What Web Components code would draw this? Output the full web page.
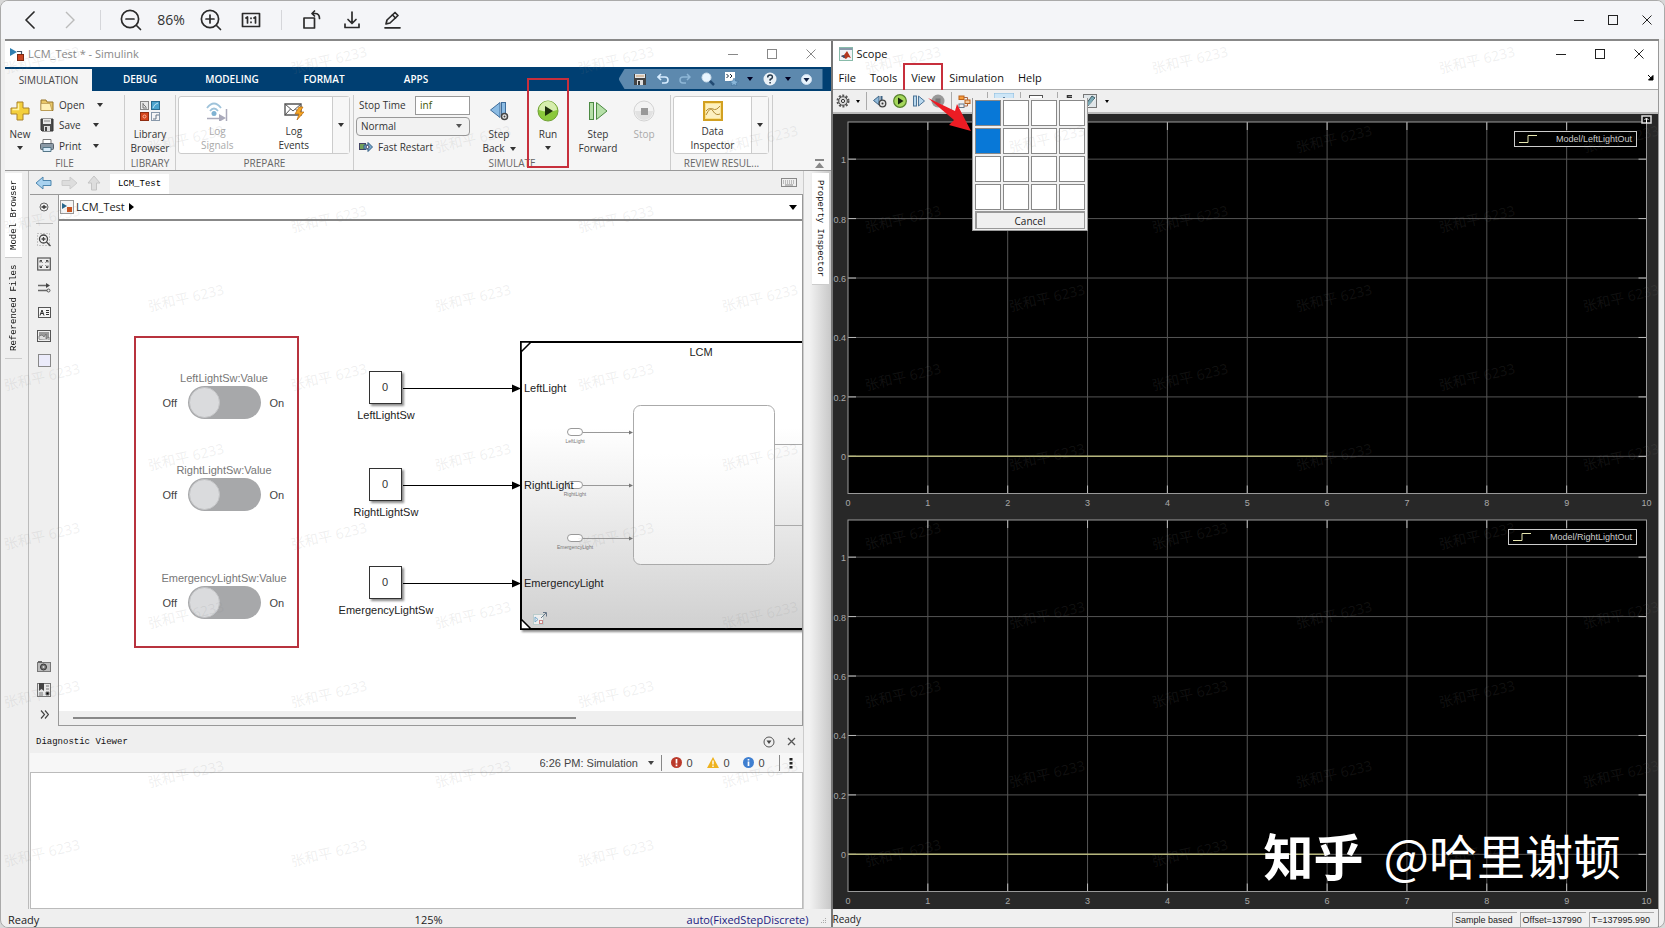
<!DOCTYPE html>
<html lang="en">
<head>
<meta charset="utf-8">
<title>Simulink and Scope</title>
<style>
  html, body { height: 100%; }
  body { margin: 0; background: #d8d8d8; overflow: hidden; font: 10px/14px "Open Sans", "Noto Sans", sans-serif; color: #333; }
</style>
</head>
<body>
<viewer-app></viewer-app>
<script>
const base = `
  *, *::before, *::after { box-sizing: border-box; }
  button { font: inherit; color: inherit; background: none; border: 0; padding: 0; margin: 0; display: flex; align-items: center; justify-content: center; }
  input, select { font: inherit; color: inherit; margin: 0; }
`;
function define(name, css, html, setup) {
  const tpl = document.createElement('template');
  tpl.innerHTML = `<style>${base}${css}</style>${html}`;
  customElements.define(name, class extends HTMLElement {
    constructor() {
      super();
      this.attachShadow({ mode: 'open' }).append(tpl.content.cloneNode(true));
    }
    connectedCallback() { if (setup && !this.ready) { this.ready = true; setup(this, this.shadowRoot); } }
  });
}

/* name: [width, height, markup] */
const dark = 'fill="none" stroke="#2b2b2b" stroke-width="1.7" stroke-linecap="round" stroke-linejoin="round"';
const icons = {
  back: [12, 18, `<path d="M10 1 2 9l8 8" ${dark}/>`],
  forward: [12, 18, `<path d="M2 1l8 8-8 8" fill="none" stroke="#bbb" stroke-width="1.4"/>`],
  zoomout: [22, 22, `<g ${dark}><circle cx="10" cy="10" r="8.6"/><path d="M6 10h8M16.500 16.500l4 4"/></g>`],
  zoomin: [22, 22, `<g ${dark}><circle cx="10" cy="10" r="8.600"/><path d="M6 10h8M10 6v8M16.500 16.500l4 4"/></g>`],
  actual: [20, 18, `<g ${dark}><rect x="1.500" y="2.500" width="17" height="13"/><path d="M5 7l1.500-1v6M13 7l1.500-1v6"/><path d="M10 7v.5M10 11v.5"/></g>`],
  rotate: [20, 20, `<g ${dark}><rect x="2" y="8" width="10.500" height="10"/><path d="M10 3.500h3q4.500 0 4.500 5M12.500 1 10 3.500 12.500 6"/></g>`],
  download: [18, 18, `<g ${dark}><path d="M9 1v11M5 8.500l4 4 4-4M2 13v3.500h14V13"/></g>`],
  edit: [18, 18, `<g ${dark}><path d="M2 16.800h15M3 13l1-4L12 1.500l3 3L7 12z"/><path d="M9.500 4l3 3"/></g>`],
  min: [10, 10, `<path d="M0 5.500h10" stroke="currentColor"/>`],
  max: [10, 10, `<rect x=".5" y=".5" width="9" height="9" fill="none" stroke="currentColor"/>`],
  close: [10, 10, `<path d="M.5 .5l9 9M9.500 .5l-9 9" stroke="currentColor"/>`],
  down: [6, 4, `<path d="M0 0h6L3 4z" fill="currentColor"/>`],
  play: [5, 8, `<path d="M0 0v8l5-4z" fill="#000"/>`],
  simulink: [14, 14, `<path d="M0 1l7 4-7 4z" fill="#2f7fb0"/><path d="M7 4.500h4.500V8" fill="none" stroke="#456" stroke-width="1.200"/><rect x="7.500" y="7.500" width="6" height="6" fill="#c9431f" stroke="#7d2911"/>`],
  doc: [14, 14, `<rect x=".5" y=".5" width="13" height="13" fill="#f4f4f4" stroke="#999"/><path d="M2 3l5 3-5 3z" fill="#27668c"/><rect x="7" y="7" width="5" height="5" fill="#c9531f"/>`],
  matlab: [14, 14, `<rect x=".5" y=".5" width="13" height="13" fill="#f1f3f5" stroke="#8ba"/><path d="M.5 2h13" stroke="#89a" stroke-width="2"/><path d="M2 9l3-1 3-4 4 7-3-1-2 2z" fill="#b5371c"/><path d="M2 9l3-1 1 2-1 1z" fill="#357"/>`],
  plus: [20, 20, `<path d="M7 1h6v6h6v6h-6v6H7v-6H1V7h6z" fill="#f3cf3c" stroke="#a9812a"/><path d="M8.500 2.500v6h-6" fill="none" stroke="#fff4a8" stroke-width="1.500"/>`],
  open: [14, 12, `<path d="M1 1h5l1 2h6v8.500H1z" fill="#e9c767" stroke="#96752b"/><path d="M1 4.500h9l2 7H1z" fill="#fff0b5" stroke="#b4934b" stroke-width=".7"/>`],
  save: [14, 14, `<path d="M1 1h12v12H2l-1-1z" fill="#4b4b4b" stroke="#333"/><rect x="3" y="1" width="8" height="5" fill="#e8e8e8"/><path d="M4 3h6" stroke="#888"/><rect x="4" y="8" width="6" height="5" fill="#ddd"/><rect x="5" y="9" width="2" height="4" fill="#444"/>`],
  print: [14, 13, `<path d="M3 .5h8V5H3z" fill="#fff" stroke="#777"/><rect x=".5" y="4.500" width="13" height="6" rx="1" fill="#8c9aa6" stroke="#56616b"/><path d="M3 8.500h8v4H3z" fill="#d8ecfa" stroke="#578"/>`],
  library: [20, 20, `<rect x=".5" y=".5" width="8" height="8" fill="#e7e7e7" stroke="#888"/><path d="M3 2v5h4M3 3l3 3" fill="none" stroke="#777"/><rect x="11.500" y=".5" width="8" height="8" fill="#4aa3cd" stroke="#276b8f"/><path d="M13 7q1-4 5-5" stroke="#b8e2f5" fill="none"/><rect x=".5" y="11.500" width="8" height="8" fill="#d4461d" stroke="#8f2d11"/><circle cx="4.500" cy="15.500" r="1.500" fill="none" stroke="#ffb59a"/><rect x="11.500" y="11.500" width="8" height="8" fill="#f5f5f5" stroke="#8898aa"/><path d="M13 18h3v-4h3" fill="none" stroke="#678"/>`],
  logsignals: [22, 20, `<g fill="none" stroke="#9fc3da" stroke-width="1.800"><path d="M1 7q7-9 14 0M4 10q4-5 8 0"/></g><circle cx="8" cy="12.500" r="2.500" fill="#7fb2d2"/><path d="M1 17.500h12M20.500 8v12" stroke="#aab" fill="none" stroke-width="1.500"/><path d="M13 13l7 4-7 4z" fill="#aab"/>`],
  logevents: [20, 18, `<path d="M1 2h16v11H1z" fill="#fff" stroke="#555" stroke-width="1.400"/><path d="M1 2l8 7 8-7M1 13l5.500-6M17 13l-5.500-6" fill="none" stroke="#555"/><path d="M15 5l-4 7h4l-2 6 7-8h-4l3-5z" fill="#f6a623" stroke="#b86a10" stroke-width=".7"/>`],
  restart: [14, 10, `<rect x=".5" y="1.500" width="6" height="6" fill="#73a05b" stroke="#446"/><path d="M5 3h4V.5l4.500 4.500L9 9.500V7H5z" fill="#78a9cf" stroke="#355e82"/><circle cx="8.500" cy="5" r="1.500" fill="#fff" stroke="#446"/>`],
  stepback: [20, 20, `<path d="M11 1.500v15L1.500 9z" fill="#8bbbe3" stroke="#3f6c9a"/><rect x="12.500" y="1.500" width="4" height="14" fill="#8bbbe3" stroke="#3f6c9a"/><circle cx="15.500" cy="15.500" r="3" fill="#eee" stroke="#444" stroke-width="1.500"/><circle cx="15.500" cy="15.500" r="1" fill="#444"/>`],
  run: [22, 22, `<circle cx="11" cy="11" r="10" fill="#8bc83b" stroke="#71a136"/><path d="M2 10a9 9 0 0118 0q-9 3-18 0z" fill="#d6edad"/><path d="M8 6l8 5-8 5z" fill="#1d2d0c"/>`],
  step: [20, 20, `<rect x="1.500" y="1.500" width="4" height="17" fill="#b6e0a8" stroke="#4c8a43"/><path d="M8.500 1.500v17L19 10z" fill="#b6e0a8" stroke="#4c8a43"/>`],
  stop: [22, 22, `<circle cx="11" cy="11" r="10" fill="#f3f3f3" stroke="#d3d3d3"/><path d="M2 11a9 9 0 0018 0z" fill="#e2e2e2"/><rect x="8" y="8" width="7" height="7" fill="#999"/>`],
  inspector: [20, 20, `<rect x="1" y="1" width="18" height="18" fill="#fbe18a" stroke="#d2a021" stroke-width="2"/><rect x="3" y="3" width="14" height="14" fill="#fdf0c0"/><path d="M3 14q4-8 7-6t7-3M3 10q4-5 7 0t7 3" fill="none" stroke="#b08a35"/>`],
  savebar: [14, 13, `<rect x="1" y="1" width="12" height="11" fill="#444"/><rect x="2" y="1" width="10" height="4" fill="#e6e6e6"/><path d="M3 3h8" stroke="#c96"/><rect x="4" y="7" width="6" height="5" fill="#ddd"/><rect x="5" y="8" width="2" height="4" fill="#333"/>`],
  undo: [12, 12, `<path d="M4 1L1 4l3 3M1 4h7q3 0 3 3t-3 3H5" fill="none" stroke="#d6ecff" stroke-width="1.600"/>`],
  redo: [12, 12, `<path d="M8 1l3 3-3 3M11 4H4Q1 4 1 7t3 3h3" fill="none" stroke="#8db6d6" stroke-width="1.500"/>`],
  find: [14, 14, `<path d="M8 8l5 5" stroke="#234b73" stroke-width="2.500"/><circle cx="5.500" cy="5.500" r="4.500" fill="#eaf6ff" stroke="#c9dcea"/>`],
  fav: [14, 14, `<rect x="0" y="0" width="10" height="9" fill="#fff"/><path d="M1.500 2l2 2-2 2M5 2l2 2-2 2" stroke="#123" fill="none"/><path d="M9 6l1.500 3 3 .4-2.300 2 .6 2.600L9 12.500 6.500 14l.4-2.600-2-2L7.700 9z" fill="#88b5d8" stroke="#3e6f98" stroke-width=".6"/>`],
  help: [14, 14, `<circle cx="7" cy="7" r="6.500" fill="#eaf1f7"/><path d="M4.700 5.500q0-2.500 2.400-2.500t2.300 2.200Q9.400 6.600 7.100 7.500v1.300M7.100 10v1.500" stroke="#24384a" stroke-width="1.500" fill="none"/>`],
  circledown: [11, 11, `<circle cx="5.500" cy="5.500" r="5" fill="#eaf4fc" stroke="#cde"/><path d="M2.500 4h6l-3 4z" fill="#124"/>`],
  ringdown: [12, 12, `<circle cx="6" cy="6" r="5" fill="none" stroke="#555"/><path d="M3.500 4.500h5L6 8z" fill="#444"/>`],
  collapse: [9, 9, `<path d="M0 1h9" stroke="#888" stroke-width="2"/><path d="M0 9h9L4.500 3.500z" fill="#888"/>`],
  navback: [17, 14, `<path d="M1 7l7-6v3.500h8v5H8V13z" fill="#a8d2ef" stroke="#4e86ad"/>`],
  navfwd: [17, 14, `<path d="M16 7L9 1v3.500H1v5h8V13z" fill="#ddd" stroke="#ccc"/>`],
  navup: [14, 16, `<path d="M7 1l6 7h-3.500v7h-5V8H1z" fill="#ddd" stroke="#c4c4c4"/>`],
  keyboard: [16, 9, `<rect x=".5" y=".5" width="15" height="8" fill="#eee" stroke="#888"/><path d="M2 3h12M2 5h12" stroke="#888" stroke-dasharray="1 1"/><path d="M4 7h8" stroke="#888"/>`],
  hide: [10, 10, `<circle cx="5" cy="5" r="4" fill="none" stroke="#666"/><path d="M2.500 5h5M5 3v4" stroke="#333" stroke-width="1.300"/>`],
  palzoom: [14, 14, `<rect x=".5" y=".5" width="12" height="12" fill="none" stroke="#999" stroke-dasharray="1 2"/><circle cx="6.500" cy="6" r="4" fill="#f5f5f5" stroke="#444" stroke-width="1.300"/><path d="M4.500 6h4M6.500 4v4M9.500 9l4 4" stroke="#444" stroke-width="1.300"/>`],
  palfit: [14, 14, `<rect x=".7" y="1" width="12.600" height="12" fill="#eee" stroke="#555" stroke-width="1.200"/><path d="M3 5.500V3.500h2M9 3.500h2v2M11 8.500v2H9M5 10.500H3v-2M3 3.500l2.500 2M11 3.500l-2.500 2M11 10.500l-2.500-2M3 10.500l2.500-2" stroke="#444" fill="none"/>`],
  palroute: [14, 10, `<path d="M1 2.500h9M1 7.500h10" stroke="#666" stroke-width="1.300"/><path d="M9 0l4 2.500L9 5z" fill="#444"/><circle cx="11.500" cy="7.500" r="1.500" fill="#eee" stroke="#555"/>`],
  palnote: [13, 11, `<rect x=".5" y=".5" width="12" height="10" fill="#f5f5f5" stroke="#555"/><path d="M2 8.500L4 3l2 5.500M2.800 6.500h2.500M8 3.500h3M8 5.500h3M8 7.500h3" stroke="#333" fill="none"/>`],
  palimg: [14, 12, `<rect x=".5" y=".5" width="13" height="11" fill="#eee" stroke="#555"/><rect x="2" y="2" width="10" height="8" fill="#999"/><path d="M2 9V6l3-1 2 2 2-3v5l3-2v3" fill="#ddd" stroke="#666" stroke-width=".7"/>`],
  palbox: [13, 13, `<rect x=".5" y=".5" width="12" height="12" fill="#ebebfa" stroke="#888"/>`],
  camera: [14, 11, `<rect x=".5" y="1.500" width="13" height="9" fill="#bbb" stroke="#777"/><path d="M1 1h4" stroke="#666" stroke-width="2"/><circle cx="6.500" cy="6" r="3" fill="#777" stroke="#333"/><circle cx="6.500" cy="6" r="1" fill="#ddd"/>`],
  palbook: [14, 14, `<rect x=".5" y=".5" width="13" height="13" fill="#e8e8e8" stroke="#777"/><path d="M2 0h5v8L4.500 6 2 8z" fill="#444"/><path d="M9 3h3M9 6h3M2 10h4M2 12h4M9 9h3v3H9z" stroke="#777"/>`],
  chevrons: [9, 9, `<path d="M1 .5l3.500 4L1 8.500M5 .5l3.500 4L5 8.500" fill="none" stroke="#444" stroke-width="1.200"/>`],
  error: [11, 11, `<circle cx="5.500" cy="5.500" r="5.500" fill="#bb3a2b"/><path d="M5.500 2v4.500M5.500 7.500v1.800" stroke="#fff" stroke-width="1.700"/>`],
  warn: [12, 11, `<path d="M6 0l6 11H0z" fill="#eeb21f"/><path d="M6 3.500v4M6 8.500V10" stroke="#fff" stroke-width="1.400"/>`],
  info: [11, 11, `<circle cx="5.500" cy="5.500" r="5.500" fill="#3f7fd0"/><path d="M5.500 4.500V9M5.500 2v1.600" stroke="#fff" stroke-width="1.700"/>`],
  dots: [4, 12, `<path d="M.5 1h3v2.500h-3zM.5 5h3v2.500h-3zM.5 9h3v2.500h-3z" fill="#222"/>`],
  grip: [8, 8, `<path d="M6 2h1v1H6zM4 4h1v1H4zM6 4h1v1H6zM2 6h1v1H2zM4 6h1v1H4zM6 6h1v1H6z" fill="#aaa"/>`],
  gear: [14, 14, `<circle cx="7" cy="7" r="5.500" fill="none" stroke="#555" stroke-width="2" stroke-dasharray="2 1.500"/><circle cx="7" cy="7" r="4.300" fill="#ddd" stroke="#444"/><circle cx="7" cy="7" r="1.600" fill="#eee" stroke="#333"/>`],
  sstepback: [14, 13, `<path d="M6 1v9L.5 5.500z" fill="#8fb9da" stroke="#3f6485"/><path d="M8.500 1v5" stroke="#3f6485" stroke-width="2"/><circle cx="9.500" cy="8.500" r="3.300" fill="#ddd" stroke="#444" stroke-width="1.300"/><circle cx="9.500" cy="8.500" r="1" fill="#333"/>`],
  srun: [14, 14, `<circle cx="7" cy="7" r="6.300" fill="#a5d75b" stroke="#55802a" stroke-width="1.200"/><path d="M5 3.500l5.500 3.500L5 10.500z" fill="#17240c"/>`],
  sstep: [12, 12, `<rect x=".5" y="1" width="3" height="10" fill="#b9d8ee" stroke="#4c7597"/><path d="M5.500 1v10l6-5z" fill="#b9d8ee" stroke="#4c7597"/>`],
  sstop: [14, 14, `<circle cx="7" cy="7" r="6.500" fill="#999"/><rect x="4.500" y="4.500" width="5" height="5" fill="#777"/>`],
  sblocks: [13, 13, `<rect x="1" y="1" width="5" height="3.500" fill="#f79b3a" stroke="#b9601a"/><rect x="7" y="5" width="5" height="3.500" fill="#f2c79a" stroke="#b9601a"/><rect x="1" y="9" width="5" height="3.500" fill="#eee" stroke="#678"/><path d="M6 2.500h3.500V5M9.500 9v2H6" fill="none" stroke="#a64"/>`],
  scursor: [20, 16, `<path d="M0 0h20v16H0z" fill="#cde6f7" stroke="#8ab9dc"/><path d="M4 5v3M16 5v3M8 6q2-3 4 0" stroke="#246" fill="none"/>`],
  sbox: [14, 12, `<rect x=".5" y=".5" width="13" height="11" fill="#fff" stroke="#555"/>`],
  strig: [9, 13, `<path d="M8 .5H3.500V12M1 5h6M3 2.500h5" stroke="#333" stroke-width="1.500" fill="none"/>`],
  spencil: [14, 14, `<rect x=".5" y=".5" width="13" height="13" fill="#dfe5e8" stroke="#777"/><path d="M3 10l6-8 3 2-6 8z" fill="#7ba9b5" stroke="#3d5c66"/><path d="M1 13h4L13 4" fill="none" stroke="#fff"/>`],
  dock: [7, 7, `<path d="M1 1l4 4M6 1.500V6H1.500z" stroke="#000" fill="#000"/>`],
  maxplot: [11, 9, `<rect x="1" y="1" width="9" height="7" fill="#111" stroke="#ddd" stroke-width="1.500"/><path d="M5.500 8V3.500M3.500 5l2-2 2 2" stroke="#fff" fill="none"/>`],
};
define('s-icon', `:host{display:inline-flex;flex:none} svg{display:block}`, ``, (el, root) => {
  const [w, h, body] = icons[el.getAttribute('name')];
  root.innerHTML += `<svg width="${w}" height="${h}" viewBox="0 0 ${w} ${h}" aria-hidden="true">${body}</svg>`;
});

define('window-controls', `
  :host{display:flex;color:#222;margin-left:auto}
  button{width:var(--pitch,39px);height:100%}
`, `<button aria-label="Minimize"><s-icon name="min"></s-icon></button><button aria-label="Maximize"><s-icon name="max"></s-icon></button><button aria-label="Close"><s-icon name="close"></s-icon></button>`);

define('viewer-toolbar', `
  :host{display:flex;align-items:stretch;height:38px;background:#f4f5f8;padding-left:9px;color:#333}
  button{width:40px}
  .sep{width:1px;height:20px;background:#d5d6da;align-self:center;margin:0 10px}
  output{width:40px;font-size:14px;line-height:20px;align-self:center;text-align:center}
  window-controls{--pitch:34px}
`, `
  <button aria-label="Previous"><s-icon name="back"></s-icon></button>
  <button aria-label="Next"><s-icon name="forward"></s-icon></button>
  <span class="sep"></span>
  <button aria-label="Zoom out"><s-icon name="zoomout"></s-icon></button>
  <output>86%</output>
  <button aria-label="Zoom in"><s-icon name="zoomin"></s-icon></button>
  <button aria-label="Actual size"><s-icon name="actual"></s-icon></button>
  <span class="sep"></span>
  <button aria-label="Rotate"><s-icon name="rotate"></s-icon></button>
  <button aria-label="Download"><s-icon name="download"></s-icon></button>
  <button aria-label="Edit"><s-icon name="edit"></s-icon></button>
  <window-controls></window-controls>
`);

define('ribbon-section', `
  :host{display:flex;flex-direction:column;border-right:1px solid #ccc;flex:none;margin-top:4px}
  .body{flex:1;display:flex;min-height:0}
  .cap{height:14px;line-height:14px;text-align:center;color:#666;white-space:nowrap}
`, `<div class="body"><slot></slot></div><div class="cap"></div>`, (el, root) => {
  root.querySelector('.cap').textContent = el.getAttribute('caption');
});

define('big-button', `
  :host{display:block;position:relative;flex:none}
  button{flex-direction:column;justify-content:flex-start;width:100%;padding-top:var(--top,4px)}
  .pic{height:24px;display:flex;align-items:center;justify-content:center}
  .t{white-space:pre-line;text-align:center;line-height:14px;margin-top:var(--gap,4px)}
  .arrow{height:14px;display:flex;align-items:center}
  :host([marked])::after{content:"";position:absolute;inset:-17px 4px -12px 4px;border:2px solid #c72f3c}
  :host([off]){color:#aaa}
`, `<button><span class="pic"></span><span class="t"><slot></slot></span></button>`, (el, root) => {
  root.querySelector('.pic').innerHTML = `<s-icon name="${el.getAttribute('icon')}"></s-icon>`;
  if (el.hasAttribute('arrow')) root.querySelector('button').insertAdjacentHTML('beforeend', '<span class="arrow"><s-icon name="down"></s-icon></span>');
});

define('simulink-ribbon', `
  :host{display:flex;height:80px;background:#f5f5f5;border-bottom:1px solid #999;color:#333;position:relative}
  .file{width:120px}.lib{width:51px}.prep{width:178px}.sim{width:317px}.rev{width:102px}
  .list{display:flex;flex-direction:column;padding-left:5px}
  .list button{height:21px;justify-content:flex-start;gap:5px}
  .list s-icon[name=down]{margin-left:7px}
  .box{display:flex;flex:1;background:#fff;border:1px solid #ccc;border-radius:3px;margin:1px 3px 2px 2px;--top:2px;--gap:1px}
  .box .more{width:17px;border-left:1px solid #ccc;background:#f7f7f7}
  .box big-button{flex:1}
  .form{display:grid;grid-template-columns:59px 55px;grid-template-rows:20px 22px 20px;align-items:center;margin-left:2px;width:119px}
  .form label{padding-left:3px}
  .form input{width:55px;height:19px;border:1px solid #999;background:#fff;padding:0 4px;color:#450}
  .sel{grid-column:1/3;position:relative;display:flex;align-items:center}
  select{appearance:none;width:114px;height:19px;border:1px solid #999;border-radius:4px;background:#f2f2f2;padding:0 4px;line-height:17px}
  .sel s-icon{position:absolute;right:8px;color:#555;pointer-events:none}
  .fast{grid-column:1/3;justify-content:flex-start;gap:5px;padding-left:3px}
  .collapse{position:absolute;right:7px;bottom:2px}
`, `
  <ribbon-section class="file" caption="FILE">
    <big-button icon="plus" arrow style="width:30px">New</big-button>
    <div class="list">
      <button><s-icon name="open"></s-icon>Open<s-icon name="down"></s-icon></button>
      <button><s-icon name="save"></s-icon>Save<s-icon name="down"></s-icon></button>
      <button><s-icon name="print"></s-icon>Print<s-icon name="down"></s-icon></button>
    </div>
  </ribbon-section>
  <ribbon-section class="lib" caption="LIBRARY"><big-button icon="library" style="width:50px">Library
Browser</big-button></ribbon-section>
  <ribbon-section class="prep" caption="PREPARE">
    <div class="box"><big-button icon="logsignals" off>Log
Signals</big-button><big-button icon="logevents">Log
Events</big-button><button class="more" aria-label="More"><s-icon name="down"></s-icon></button></div>
  </ribbon-section>
  <ribbon-section class="sim" caption="SIMULATE">
    <div class="form">
      <label for="stop">Stop Time</label><input id="stop" value="inf">
      <span class="sel"><select aria-label="Simulation mode"><option>Normal</option></select><s-icon name="down"></s-icon></span>
      <button class="fast"><s-icon name="restart"></s-icon>Fast Restart</button>
    </div>
    <big-button icon="stepback" style="width:48px">Step
Back<s-icon name="down" style="margin-left:5px;vertical-align:middle"></s-icon></big-button>
    <big-button icon="run" arrow marked style="width:50px">Run</big-button>
    <big-button icon="step" style="width:50px">Step
Forward</big-button>
    <big-button icon="stop" off style="width:42px">Stop</big-button>
  </ribbon-section>
  <ribbon-section class="rev" caption="REVIEW RESUL...">
    <div class="box"><big-button icon="inspector">Data
Inspector</big-button><button class="more" aria-label="More"><s-icon name="down"></s-icon></button></div>
  </ribbon-section>
  <button class="collapse" aria-label="Collapse ribbon"><s-icon name="collapse"></s-icon></button>
`);

define('toggle-switch', `
  :host{position:absolute;display:block;width:140px;color:#444;font:11px/16px "Liberation Sans",Arial,sans-serif}
  label{display:block;text-align:center;color:#777}
  .row{display:flex;align-items:center;justify-content:center;gap:9px}
  .row span{width:16px;white-space:nowrap}
  input{appearance:none;width:73px;height:33px;border-radius:17px;background:#a7a8aa;display:flex;padding:1px;flex:none}
  input::before{content:"";width:31px;height:31px;border-radius:50%;background:#dadbdd;border:1px solid #c4c5c7}
  input:checked{justify-content:flex-end}
`, `<label for="s"></label><div class="row"><span>Off</span><input id="s" type="checkbox" role="switch"><span>On</span></div>`, (el, root) => {
  root.querySelector('label').textContent = el.getAttribute('label');
});

define('model-canvas', `
  :host{display:block;position:relative;overflow:hidden;background:#fff;min-height:0}
  svg{position:absolute;inset:0;width:100%;height:100%;font:11px "Liberation Sans",Arial,sans-serif}
  .mark{position:absolute;left:75px;top:115px;width:165px;height:312px;border:2px solid #b8323e}
`, `
  <svg role="img" aria-label="LCM_Test model">
    <defs>
      <linearGradient id="g" x1="0" y1="0" x2="0" y2="1"><stop offset=".3" stop-color="#fff"/><stop offset="1" stop-color="#d0d0d0"/></linearGradient>
      <linearGradient id="h" x1="0" y1="0" x2="0" y2="1"><stop offset=".3" stop-color="#fff"/><stop offset="1" stop-color="#f1f1f1"/></linearGradient>
      <filter id="sh" x="-20%" y="-20%" width="150%" height="150%"><feDropShadow dx="2" dy="2" stdDeviation="1" flood-opacity=".45"/></filter>
    </defs>
    <rect x="462" y="121" width="600" height="287" fill="url(#g)" stroke="#000" stroke-width="2" filter="url(#sh)"/>
    <path d="M462 131l10-10h-10zM462 398l10 10h-10z" fill="#fff" stroke="#000" stroke-width="1.500"/>
    <text x="642" y="135" text-anchor="middle" fill="#222">LCM</text>
    <rect x="574.500" y="184.500" width="141" height="159" rx="7" fill="url(#h)" stroke="#aaa"/>
    <path d="M716 223.500h400M716 304.500h400" stroke="#aaa"/>
    <g id="ports"></g><g id="blocks"></g>
    <g fill="none" stroke="#bcc"><rect x="474.500" y="393.500" width="10" height="10" fill="#eee"/><path d="M482 397l5-5M484 391.500h3.500v4" stroke="#678"/><path d="M476 396v5l3-2.500z" stroke="#7ac"/><rect x="480.500" y="399.500" width="3" height="3" stroke="#c88"/></g>
  </svg>
  <toggle-switch label="LeftLightSw:Value" style="left:95px;top:149px"></toggle-switch>
  <toggle-switch label="RightLightSw:Value" style="left:95px;top:241px"></toggle-switch>
  <toggle-switch label="EmergencyLightSw:Value" style="left:95px;top:349px"></toggle-switch>
  <div class="mark"></div>
`, (el, root) => {
  const blocks = [['LeftLight', 167], ['RightLight', 264], ['EmergencyLight', 362]];
  root.getElementById('blocks').innerHTML = blocks.map(([n, y]) => `
    <rect x="310.500" y="${y - 16.5}" width="32" height="32" fill="#fff" stroke="#333" filter="url(#sh)"/>
    <text x="326" y="${y + 3}" text-anchor="middle" fill="#333">0</text>
    <text x="327" y="${y + 31}" text-anchor="middle" fill="#222">${n}Sw</text>
    <path d="M344 ${y + .5}h110" stroke="#000"/><path d="M453 ${y - 3.5}v8l9-4z" fill="#000"/>
    <text x="465" y="${y + 4}" fill="#222">${n}</text>`).join('');
  const ports = [['LeftLight', 211], ['RightLight', 264], ['EmergencyLight', 317]];
  root.getElementById('ports').innerHTML = ports.map(([n, y]) => `
    <rect x="508.500" y="${y - 3.5}" width="15" height="7" rx="3.500" fill="#fff" stroke="#999"/>
    <path d="M524 ${y + .5}h48" stroke="#999"/><path d="M570 ${y - 1.5}v4l4-2z" fill="#777"/>
    <text x="516" y="${y + 11}" text-anchor="middle" font-size="5" fill="#777">${n}</text>`).join('');
});

define('model-editor', `
  :host{display:flex;flex-direction:column;min-width:0;min-height:0}
  .tabs{display:flex;align-items:center;height:24px;border-bottom:1px solid #999;background:#efefef;padding-left:5px;gap:9px;flex:none}
  .tab{align-self:flex-end;height:20px;background:#fff;width:59px;color:#000;font:9px/20px "Liberation Mono",monospace}
  .tabs .kb{margin-left:auto;margin-right:6px}
  .work{flex:1;display:flex;min-height:0}
  .pal{width:28px;display:flex;flex-direction:column;align-items:center;background:#efefef;flex:none}
  .pal button{width:28px;height:24px;flex:none}
  .pal hr{width:17px;height:1px;border:0;background:#bbb;margin:4px 0}
  .pal .gap{flex:1}
  .ed{flex:1;display:flex;flex-direction:column;border:1px solid #999;border-top:0;min-width:0}
  .crumb{height:26px;display:flex;align-items:center;gap:2px;background:#fff;border-bottom:2px solid #888;padding:0 5px 0 1px;font-size:11px;color:#222;flex:none}
  .crumb a{color:inherit;text-decoration:none;margin-right:2px}
  .crumb .dd{margin-left:auto;color:#000}
  model-canvas{flex:1}
  .scroll{height:14px;background:#efefef;padding:6px 0 0 14px;flex:none}
  .scroll i{display:block;width:69%;height:2px;background:#888}
`, `
  <div class="tabs">
    <button aria-label="Back"><s-icon name="navback"></s-icon></button>
    <button aria-label="Forward"><s-icon name="navfwd"></s-icon></button>
    <button aria-label="Up"><s-icon name="navup"></s-icon></button>
    <button class="tab">LCM_Test</button>
    <button class="kb" aria-label="Keyboard"><s-icon name="keyboard"></s-icon></button>
  </div>
  <div class="work">
    <div class="pal">
      <button aria-label="Hide browser"><s-icon name="hide"></s-icon></button><hr>
      <button aria-label="Zoom"><s-icon name="palzoom"></s-icon></button>
      <button aria-label="Fit to view"><s-icon name="palfit"></s-icon></button>
      <button aria-label="Route"><s-icon name="palroute"></s-icon></button>
      <button aria-label="Annotation"><s-icon name="palnote"></s-icon></button>
      <button aria-label="Image"><s-icon name="palimg"></s-icon></button>
      <button aria-label="Area"><s-icon name="palbox"></s-icon></button>
      <span class="gap"></span>
      <button aria-label="Screenshot"><s-icon name="camera"></s-icon></button>
      <button aria-label="Bookmarks"><s-icon name="palbook"></s-icon></button>
      <button aria-label="More"><s-icon name="chevrons"></s-icon></button>
    </div>
    <div class="ed">
      <div class="crumb"><s-icon name="doc"></s-icon><a href="#">LCM_Test</a><s-icon name="play"></s-icon><button class="dd" aria-label="History"><svg width="8" height="5"><path d="M0 0h8L4 5z"/></svg></button></div>
      <model-canvas></model-canvas>
      <div class="scroll"><i></i></div>
    </div>
  </div>
`);

define('diagnostic-viewer', `
  :host{display:block;color:#333}
  .head{display:flex;align-items:center;height:27px;background:#efefef;padding:4px 6px 0;gap:12px}
  h2{margin:0 auto 0 0;color:#111;font:9px/14px "Liberation Mono",monospace}
  .bar{display:flex;align-items:center;height:19px;background:#f7f7f7;justify-content:flex-end;padding-right:10px;font:11px/16px "Liberation Sans",Arial,sans-serif;color:#444}
  .sel{position:relative;display:flex;align-items:center;margin-right:7px}
  select{appearance:none;border:0;background:none;width:114px;padding:0;height:18px}
  .sel s-icon{position:absolute;right:0;pointer-events:none}
  .cnt{display:flex;align-items:center;gap:5px;width:36px}
  .v{width:1px;height:16px;background:#888;margin-right:9px}
  .log{height:137px;background:#fff;border:1px solid #bbb}
`, `
  <div class="head"><h2>Diagnostic Viewer</h2><button aria-label="Options"><s-icon name="ringdown"></s-icon></button><button aria-label="Close"><svg width="10" height="10"><path d="M1 1l7 7M8 1l-7 7" stroke="#555" stroke-width="1.300"/></svg></button></div>
  <div class="bar">
    <span class="sel"><select aria-label="Run"><option>6:26 PM: Simulation</option></select><s-icon name="down"></s-icon></span>
    <span class="v"></span>
    <span class="cnt"><s-icon name="error"></s-icon>0</span><span class="cnt"><s-icon name="warn"></s-icon>0</span><span class="cnt"><s-icon name="info"></s-icon>0</span>
    <span class="v"></span>
    <button aria-label="More"><s-icon name="dots"></s-icon></button>
  </div>
  <div class="log"></div>
`);

define('simulink-window', `
  :host{display:flex;flex-direction:column;background:#efefef;min-width:0;border-right:2px solid #777}
  .title{display:flex;align-items:stretch;height:26px;background:#fff;padding-left:5px;gap:4px;color:#888;flex:none}
  .title s-icon,.title h1{align-self:center}
  h1{margin:0;font-size:11px;line-height:16px;font-weight:400}
  window-controls{color:#888;--pitch:39px}
  nav{display:flex;align-items:center;height:24px;background:#003f72;color:#fff;flex:none}
  nav>button{width:92px;height:24px;font-weight:600}
  nav>button.on{width:87px;height:22px;align-self:flex-end;background:#f5f5f5;color:#444;font-weight:400;margin-right:2px}
  .quick{margin-left:auto;margin-right:8px;display:flex;align-items:center;gap:10px;width:204px;height:20px;background:#5d89ae;clip-path:polygon(0 50%,6px 0,100% 0,100% 100%,6px 100%);padding-left:14px;color:#002}
  .mid{flex:1;display:flex;min-height:0}
  .dock{font:9px/16px "Liberation Mono",monospace;color:#111}
  .dock button{writing-mode:vertical-rl;width:17px;border-bottom:1px solid #ccc}
  .left{width:24px;border-right:1px solid #bbb;margin-right:1px;padding-top:2px}
  .left button{transform:rotate(180deg);border:0;border-top:1px solid #ccc}
  .left .on,.right button{background:#fff}
  .main{flex:1;display:flex;flex-direction:column;min-width:0}
  model-editor{flex:1}
  .right{width:28px;border-left:1px solid #ccc;background:linear-gradient(90deg,#f2f2f2 20%,#c8c8c8);padding:2px 0 0 8px}
  .status{display:flex;height:18px;align-items:center;padding:4px 0 0 3px;font-size:11px;line-height:14px;color:#222;flex:none}
  .status span{flex:1}.status .z{flex:none}.status .s{text-align:right;color:#1a1a80;flex:.9}
  .status s-icon{margin:0 4px 0 10px}
`, `
  <div class="title"><s-icon name="simulink"></s-icon><h1>LCM_Test * - Simulink</h1><window-controls></window-controls></div>
  <nav>
    <button class="on">SIMULATION</button><button>DEBUG</button><button>MODELING</button><button>FORMAT</button><button>APPS</button>
    <div class="quick">
      <button aria-label="Save"><s-icon name="savebar"></s-icon></button><button aria-label="Undo"><s-icon name="undo"></s-icon></button><button aria-label="Redo"><s-icon name="redo"></s-icon></button><button aria-label="Find"><s-icon name="find"></s-icon></button>
      <button aria-label="Favorites" style="gap:8px"><s-icon name="fav"></s-icon><s-icon name="down"></s-icon></button><button aria-label="Help" style="gap:8px"><s-icon name="help"></s-icon><s-icon name="down"></s-icon></button><button aria-label="Customize"><s-icon name="circledown"></s-icon></button>
    </div>
  </nav>
  <simulink-ribbon></simulink-ribbon>
  <div class="mid">
    <div class="dock left"><button class="on" style="height:85px">Model Browser</button><button style="height:101px">Referenced Files</button></div>
    <div class="main"><model-editor></model-editor><diagnostic-viewer></diagnostic-viewer></div>
    <div class="dock right"><button style="height:112px">Property Inspector</button></div>
  </div>
  <div class="status"><span>Ready</span><span class="z">125%</span><span class="s">auto(FixedStepDiscrete)</span><s-icon name="grip"></s-icon></div>
`);

/* Time plot drawn in percentages of its own box, so it follows the window */
define('scope-chart', `
  :host{display:block;min-height:0;padding:8px 12px 18px 15px}
  svg{display:block;width:100%;height:100%;overflow:visible;font:9px "Liberation Sans",Arial,sans-serif}
  .p{position:relative;height:100%;background:#000}
  .leg{position:absolute;top:9px;right:9px;display:flex;align-items:center;justify-content:space-between;height:16px;width:var(--w);border:1px solid #ccc;background:#000;color:#ccc;padding:0 4px;font:9px/14px "Liberation Sans",Arial,sans-serif}
  .leg svg{width:18px;height:10px;flex:none}
`, `<div class="p"><svg class="plot" role="img"></svg><div class="leg"><svg><path d="M0 8.500h9V1.500h9" fill="none" stroke="#e6e6b0"/></svg><span></span></div></div>`, (el, root) => {
  const name = el.getAttribute('label'), end = el.getAttribute('end');
  let s = '';
  for (let i = 0; i <= 10; i++) {
    const x = i * 10 + '%';
    if (i && i < 10) s += `<line x1="${x}" x2="${x}" y1="0" y2="100%" stroke="#555"/><line x1="${x}" x2="${x}" y1="0" y2="8" stroke="#bbb"/><svg x="${x}" y="100%" overflow="visible"><path d="M0 0v-8" stroke="#bbb"/></svg>`;
    s += `<svg x="${x}" y="100%" overflow="visible"><text y="12" text-anchor="middle" fill="#aaa">${i}</text></svg>`;
  }
  ['1', '0.8', '0.6', '0.4', '0.2', '0'].forEach((v, i) => {
    const y = 10 + i * 16 + '%';
    s += `<line x1="0" x2="100%" y1="${y}" y2="${y}" stroke="#555"/><line x1="0" x2="8" y1="${y}" y2="${y}" stroke="#bbb"/>
      <svg x="100%" y="${y}" overflow="visible"><path d="M0 0h-8" stroke="#bbb"/></svg>
      <svg y="${y}" overflow="visible"><text x="-2" y="4" text-anchor="end" fill="#aaa">${v}</text></svg>`;
  });
  s += `<line x1="0" x2="${end}" y1="90%" y2="90%" stroke="#b5b57c" stroke-width="1.500"/><rect width="100%" height="100%" fill="none" stroke="#999"/>`;
  const plot = root.querySelector('.plot');
  plot.innerHTML = s; plot.setAttribute('aria-label', name);
  root.querySelector('.leg span').textContent = name;
});

define('layout-picker', `
  :host{position:absolute;display:block;left:139px;top:8px;width:116px;background:#f0f0f0;border:1px solid #999;border-top:0;padding:2px 2px 1px;z-index:2}
  .g{display:grid;grid-template-columns:repeat(4,26px);gap:2px;justify-content:space-between}
  .g button{height:26px;background:#fff;border:1px solid #888}
  .g button.on{background:#0878d7}
  .c{width:100%;height:18px;margin-top:1px;border:1px solid #999;border-width:2px 1px 1px 2px;color:#222}
`, `<div class="g"></div><button class="c">Cancel</button>`, (el, root) => {
  root.querySelector('.g').innerHTML = Array.from({ length: 16 }, (_, i) =>
    `<button aria-label="${(i >> 2) + 1} by ${i % 4 + 1}"${i === 0 || i === 4 ? ' class="on"' : ''}></button>`).join('');
});

define('scope-window', `
  :host{display:flex;flex-direction:column;background:#282828;min-width:0;color:#111;border-right:1px solid #999}
  .title{display:flex;height:25px;background:#fff;padding-left:6px;gap:4px;flex:none}
  .title s-icon,h1{align-self:center}
  h1{margin:0;font-size:11px;line-height:16px;font-weight:400}
  .menu{display:flex;align-items:center;height:24px;background:#fff;padding:0 4px 0 6px;gap:14px;border-bottom:1px solid #aaa;flex:none;font-size:11px}
  .menu button{position:relative}
  .menu .mark::after{content:"";position:absolute;inset:-8px -8px -7px -8px;border:2px solid #c72f3c}
  .menu .dock{margin-left:auto}
  .tools{position:relative;display:flex;align-items:center;height:24px;background:#efefef;border-bottom:2px solid #bbb;padding:0 3px;gap:6px;flex:none}
  .tools .v{width:1px;height:18px;background:#aaa}
  .arrow{position:absolute;left:95px;top:8px;z-index:3}
  .plots{flex:1;display:grid;grid-template-rows:1fr 1fr;min-height:0;position:relative}
  .mp{position:absolute;right:6px;top:1px}
  .status{display:flex;height:18px;align-items:center;background:#f0f0f0;color:#222;flex:none;gap:3px;padding:2px 4px 0 0}
  .status b{font-weight:400;margin-right:auto;font-size:10px}
  .status span{height:15px;line-height:15px;border:1px solid #aaa;border-width:1px 0 0 1px;padding:0 4px 0 2px;font-family:"Liberation Sans",Arial,sans-serif;font-size:9px;white-space:nowrap}
`, `
  <div class="title"><s-icon name="matlab"></s-icon><h1>Scope</h1><window-controls></window-controls></div>
  <div class="menu"><button>File</button><button>Tools</button><button class="mark">View</button><button>Simulation</button><button>Help</button><button class="dock" aria-label="Dock"><s-icon name="dock"></s-icon></button></div>
  <div class="tools">
    <button aria-label="Settings" style="gap:6px"><s-icon name="gear"></s-icon><svg width="4" height="3"><path d="M0 0h4L2 3z"/></svg></button><span class="v"></span>
    <button aria-label="Step back"><s-icon name="sstepback"></s-icon></button><button aria-label="Run"><s-icon name="srun"></s-icon></button><button aria-label="Step forward"><s-icon name="sstep"></s-icon></button><button aria-label="Stop"><s-icon name="sstop"></s-icon></button><span class="v"></span>
    <button aria-label="Highlight block"><s-icon name="sblocks"></s-icon></button><span class="v" style="margin-left:10px"></span>
    <button aria-label="Zoom"><s-icon name="scursor"></s-icon></button><span class="v"></span>
    <button aria-label="Scale" style="margin-left:2px"><s-icon name="sbox"></s-icon></button><span class="v" style="margin-left:8px"></span>
    <button aria-label="Trigger"><s-icon name="strig"></s-icon></button>
    <button aria-label="Measurements" style="gap:8px;margin-left:4px"><s-icon name="spencil"></s-icon><svg width="4" height="3"><path d="M0 0h4L2 3z"/></svg></button>
    <layout-picker></layout-picker>
    <svg class="arrow" width="46" height="36" aria-hidden="true"><path d="M0 0l27 13 2-7 14 27-22-6 5-5z" fill="#ec1c24"/></svg>
  </div>
  <div class="plots">
    <scope-chart label="Model/LeftLightOut" end="60%" style="--w:123px"></scope-chart>
    <scope-chart label="Model/RightLightOut" end="60%" style="--w:129px"></scope-chart>
    <s-icon class="mp" name="maxplot"></s-icon>
  </div>
  <div class="status"><b>Ready</b><span>Sample based</span><span>Offset=137990</span><span>T=137995.990</span></div>
`);

define('water-mark', `
  :host{position:absolute;inset:0;overflow:hidden;pointer-events:none;z-index:5}
  svg{display:block;width:100%;height:100%;font:14px "Open Sans","Noto Sans CJK SC",sans-serif;fill:rgba(128,128,128,.13)}
`, `<svg aria-hidden="true"></svg>`, (el, root) => {
  let s = '';
  for (let r = 0; r < 11; r++)
    for (let c = 0; c < 6; c++) {
      const x = (r % 2 ? 186 : 42) + c * 287, y = 64 + Math.round(r * 79.3);
      if (x < 1640) s += `<text transform="translate(${x} ${y}) rotate(-13)" text-anchor="middle">张和平 6233</text>`;
    }
  root.querySelector('svg').innerHTML = s;
});

define('author-credit', `
  :host{position:absolute;right:43px;bottom:37px;z-index:6;display:flex;align-items:center;gap:20px;color:#fff;font:48px/72px "Noto Sans CJK SC",sans-serif;white-space:nowrap;pointer-events:none}
  b{font-size:50px;font-weight:700}
`, `<b>知乎</b><span>@哈里谢顿</span>`);

define('viewer-app', `
  :host{display:flex;flex-direction:column;position:relative;height:100vh;border:1px solid #aaa;border-radius:8px;overflow:hidden;background:#f0f0f0;box-sizing:border-box}
  .desk{flex:1;display:flex;min-height:0;margin:0 5px 0 4px;border-top:2px solid #888}
  .desk>*{flex:1 1 0}
`, `
  <viewer-toolbar></viewer-toolbar>
  <div class="desk"><simulink-window></simulink-window><scope-window></scope-window></div>
  <water-mark></water-mark>
  <author-credit></author-credit>
`);
</script>
</body>
</html>
